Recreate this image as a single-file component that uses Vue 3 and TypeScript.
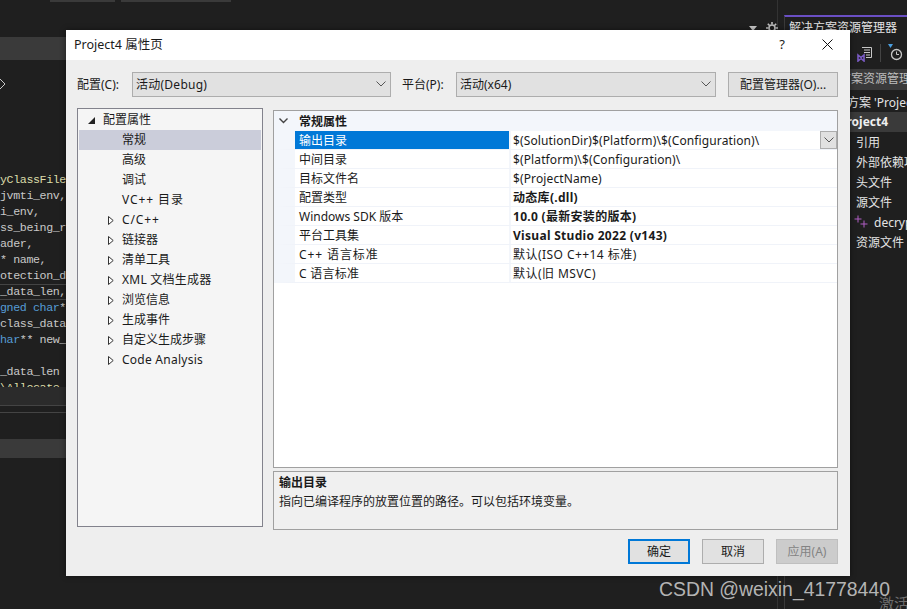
<script setup lang="ts">
interface CodeLine { text: string; tail?: string; cls?: string }
const codeLines: CodeLine[] = [
  { text: 'yClassFile', cls: 'fn' },
  { text: 'jvmti_env,' },
  { text: 'i_env,' },
  { text: 'ss_being_r' },
  { text: 'ader,' },
  { text: '* name,' },
  { text: 'otection_d' },
  { text: '_data_len,', cls: 'current' },
  { text: 'gned char', tail: '*', cls: 'kw' },
  { text: 'class_data' },
  { text: 'har', tail: '** new_', cls: 'kw' },
  { text: '\u00a0' },
  { text: '_data_len ' },
  { text: '\\Allocate', cls: 'fn' },
]
const tree = [
  { label: '常规', arrow: false, selected: true, ls: '' },
  { label: '高级', arrow: false, ls: '' },
  { label: '调试', arrow: false, ls: '' },
  { label: 'VC++ 目录', arrow: false, ls: 'ls2' },
  { label: 'C/C++', arrow: true, ls: 'ls2' },
  { label: '链接器', arrow: true, ls: '' },
  { label: '清单工具', arrow: true, ls: '' },
  { label: 'XML 文档生成器', arrow: true, ls: 'ls1' },
  { label: '浏览信息', arrow: true, ls: '' },
  { label: '生成事件', arrow: true, ls: '' },
  { label: '自定义生成步骤', arrow: true, ls: '' },
  { label: 'Code Analysis', arrow: true, ls: 'ls1' },
]
const props = [
  { name: '输出目录', value: '$(SolutionDir)$(Platform)\\$(Configuration)\\', selected: true, ls: '', vls: '' },
  { name: '中间目录', value: '$(Platform)\\$(Configuration)\\', ls: '', vls: '' },
  { name: '目标文件名', value: '$(ProjectName)', ls: '', vls: '' },
  { name: '配置类型', value: '动态库(.dll)', bold: true, ls: '', vls: '' },
  { name: 'Windows SDK 版本', value: '10.0 (最新安装的版本)', bold: true, ls: '', vls: '' },
  { name: '平台工具集', value: 'Visual Studio 2022 (v143)', bold: true, ls: '', vls: '' },
  { name: 'C++ 语言标准', value: '默认(ISO C++14 标准)', ls: 'ls2', vls: 'ls3' },
  { name: 'C 语言标准', value: '默认(旧 MSVC)', ls: 'ls1', vls: 'ls3' },
]
const solution = ['引用', '外部依赖项', '头文件', '源文件']
</script>

<template>
  <div class="screen">
    <div class="top-strips"><span class="strip s1"></span><span class="strip s2"></span></div>

    <div class="ide">
      <section class="editor">
        <div class="tab-band"></div>
        <div class="chev">
          <svg width="8" height="12" viewBox="0 0 8 12"><path d="M0 1 L5 6 L0 11" fill="none" stroke="#c8c8c8" stroke-width="1" /></svg>
        </div>
        <div class="code">
          <div v-for="(l, i) in codeLines" :key="i" class="code-line" :class="l.cls">{{ l.text }}<span v-if="l.tail" class="tail">{{ l.tail }}</span></div>
        </div>
        <div class="hscroll"></div>
        <div class="rule"></div>
        <div class="output-band"></div>
      </section>

      <div class="gutter-col"></div>

      <aside class="explorer">
        <div class="ex-title-row">
          <span class="ex-title">解决方案资源管理器</span>
        </div>
        <div class="ex-tools">
          <svg class="tool" width="16" height="18" viewBox="0 0 16 18">
            <path d="M1 11 L4 13.5 L7 11 L7 17 L4 14.5 L1 17 Z" fill="none" stroke="#7a5bc4" stroke-width="1.6" />
            <path d="M5 3.5 H14.5 V13.5 H9" fill="none" stroke="#c8c8c8" />
            <path d="M7 6 H13 M7 8.5 H13 M9 11 H13" stroke="#c8c8c8" />
          </svg>
          <span class="ex-sep"></span>
          <svg class="tool" width="15" height="18" viewBox="0 0 15 18">
            <path d="M0 0 H5 L2.5 4 Z" fill="#4a9fe0" />
            <circle cx="8.5" cy="10.5" r="5" fill="none" stroke="#c8c8c8" stroke-width="1.3" />
            <path d="M8.5 7.5 V10.5 H11" fill="none" stroke="#c8c8c8" />
          </svg>
        </div>
        <div class="ex-search">解决方案资源管理器</div>
        <div class="ex-sol">解决方案 'Project4'</div>
        <div class="ex-proj">Project4</div>
        <div v-for="s in solution" :key="s" class="ex-item">{{ s }}</div>
        <div class="ex-file">
          <svg class="tool" width="16" height="14" viewBox="0 0 16 14"><path d="M5 0.5 V7.5 M1.5 4 H8.5 M11 5.5 V12.5 M7.5 9 H14.5" stroke="#b05fc4" stroke-width="1" /></svg>
          <span>decrypt.cpp</span>
        </div>
        <div class="ex-item">资源文件</div>
      </aside>
    </div>

    <div class="head-icons">
      <svg width="8" height="5" viewBox="0 0 8 5"><path d="M0 0 H8 L4 5 Z" fill="#c8c8c8" /></svg>
      <svg width="12" height="12" viewBox="0 0 12 12">
        <circle cx="6" cy="6" r="3" fill="none" stroke="#c0c0c0" stroke-width="1.6" />
        <path d="M6 0 V2.5 M6 9.5 V12 M0 6 H2.5 M9.5 6 H12 M1.8 1.8 L3.5 3.5 M8.5 8.5 L10.2 10.2 M10.2 1.8 L8.5 3.5 M3.5 8.5 L1.8 10.2" stroke="#c0c0c0" stroke-width="1.6" />
      </svg>
    </div>

    <div class="dialog">
      <header class="titlebar">
        <span class="title">Project4 属性页</span>
        <span class="help">?</span>
        <svg class="close" width="11" height="11" viewBox="0 0 11 11"><path d="M0.5 0.5 L10.5 10.5 M10.5 0.5 L0.5 10.5" stroke="#111" stroke-width="1" /></svg>
      </header>

      <div class="body">
        <div class="config-row">
          <label class="lbl lbl-c">配置(C):</label>
          <div class="combo combo-c">
            <span class="ls1">活动(Debug)</span>
            <svg width="10" height="6" viewBox="0 0 10 6"><path d="M0.5 0.5 L5 5 L9.5 0.5" fill="none" stroke="#555" /></svg>
          </div>
          <label class="lbl lbl-p">平台(P):</label>
          <div class="combo combo-p">
            <span>活动(x64)</span>
            <svg width="10" height="6" viewBox="0 0 10 6"><path d="M0.5 0.5 L5 5 L9.5 0.5" fill="none" stroke="#555" /></svg>
          </div>
          <button class="mgr">配置管理器(O)...</button>
        </div>

        <div class="main">
          <nav class="tree">
            <div class="tree-row root">
              <svg class="arrow-open" width="7" height="7" viewBox="0 0 7 7"><path d="M7 0 V7 H0 Z" fill="#222" /></svg>
              <span>配置属性</span>
            </div>
            <div v-for="t in tree" :key="t.label" class="tree-row child" :class="{ sel: t.selected }">
              <svg v-if="t.arrow" class="arrow" width="6" height="9" viewBox="0 0 6 9"><path d="M0.5 0.5 L5.2 4.5 L0.5 8.5 Z" fill="#fff" stroke="#333" /></svg>
              <span :class="t.ls">{{ t.label }}</span>
            </div>
          </nav>

          <div class="right">
            <div class="grid">
              <div class="group">
                <svg width="9" height="6" viewBox="0 0 9 6"><path d="M0.5 0.5 L4.5 4.5 L8.5 0.5" fill="none" stroke="#444" stroke-width="1.4" /></svg>
                <span>常规属性</span>
              </div>
              <div v-for="p in props" :key="p.name" class="prop" :class="{ sel: p.selected }">
                <span class="pname" :class="p.ls">{{ p.name }}</span>
                <span class="pval" :class="[{ bold: p.bold }, p.vls]">{{ p.value }}</span>
                <span v-if="p.selected" class="drop">
                  <svg width="10" height="6" viewBox="0 0 10 6"><path d="M0.5 0.5 L5 5 L9.5 0.5" fill="none" stroke="#555" /></svg>
                </span>
              </div>
            </div>
            <div class="desc">
              <div class="desc-t">输出目录</div>
              <div class="desc-b">指向已编译程序的放置位置的路径。可以包括环境变量。</div>
            </div>
          </div>
        </div>

        <div class="actions">
          <button class="btn ok"><span class="btn-t">确定</span></button>
          <button class="btn"><span class="btn-t">取消</span></button>
          <button class="btn off"><span class="btn-t">应用(A)</span></button>
        </div>
      </div>
    </div>

    <div class="watermark">CSDN @weixin_41778440</div>
    <div class="activate">激活</div>
  </div>
</template>

<style>
html, body { margin: 0; background: #1f1f1f; }
</style>

<style scoped>
.screen {
  position: relative;
  width: 907px;
  height: 609px;
  overflow: hidden;
  background: #1f1f1f;
  font-family: "Noto Sans", "Noto Sans CJK SC", sans-serif;
  font-size: 12px;
  color: #1a1a1a;
}
.ls1 { letter-spacing: 0.25px; }
.ls2 { letter-spacing: 0.9px; }
.ls3 { letter-spacing: 0.5px; }
.top-strips { position: absolute; top: 0; left: 0; display: flex; }
.strip { height: 2px; background: #3a3a3a; display: block; }
.s1 { width: 65px; margin-left: 50px; }
.s2 { width: 110px; margin-left: 6px; }

.ide { display: flex; height: 609px; }
.editor { width: 777px; flex: none; padding-top: 37px; box-sizing: border-box; }
.tab-band { height: 23px; background: #3a3a3a; width: 66px; }
.chev { height: 113px; padding: 17px 0 0 0; box-sizing: border-box; }
.code {
  font-family: "Liberation Mono", monospace;
  font-size: 11.67px;
  letter-spacing: -0.4px;
  line-height: 16px;
  color: #c8c8c8;
  height: 215px;
  overflow: hidden;
  margin-top: -1px;
  width: 66px;
  white-space: pre;
}
.code-line { height: 16px; }
.code-line.fn { color: #dcdcaa; }
.code-line.kw { color: #569cd6; }
.tail { color: #c8c8c8; }
.code-line.current { border-top: 1px solid #444; border-bottom: 1px solid #444; height: 14px; line-height: 14px; }
.hscroll { height: 18px; width: 66px; background: #2b2b2b; border-bottom: 1px solid #444; }
.rule { height: 1px; margin-top: 6px; width: 66px; background: #444; }
.output-band { height: 19px; width: 66px; margin-top: 26px; background: #3a3a3a; }

.gutter-col { width: 7px; flex: none; border-left: 1px solid #333; box-sizing: border-box; }

.explorer {
  flex: 1;
  min-width: 0;
  margin-top: 15px;
  border-top: 2px solid #6a4fc4;
  border-left: 1px solid #3a3a3a;
  color: #e4e4e4;
  font-size: 12px;
  overflow: hidden;
  white-space: nowrap;
}
.ex-title-row { height: 22px; padding: 1px 0 0 4px; box-sizing: border-box; line-height: 20px; }
.ex-tools { height: 30px; display: flex; align-items: center; gap: 7px; padding: 0 0 3px 72px; box-sizing: border-box; }
.tool { flex: none; }
.ex-sep { width: 1px; height: 18px; background: #444; flex: none; }
.ex-search { height: 21px; line-height: 20px; background: #3a3a3a; padding-left: 30px; color: #bdbdbd; }
.ex-sol { height: 22px; line-height: 26px; padding-left: 38px; }
.ex-proj { height: 20px; line-height: 20px; padding-left: 54px; font-weight: 700; background: #3a3a3a; color: #f0f0f0; }
.ex-item { height: 20px; line-height: 22px; padding-left: 71px; }
.ex-file { height: 20px; display: flex; align-items: center; gap: 5px; padding-left: 68px; }

.head-icons { position: absolute; left: 749px; top: 22px; display: flex; align-items: center; gap: 9px; }

.dialog {
  position: absolute;
  left: 66px;
  top: 30px;
  width: 784px;
  height: 546px;
  background: #eeeeee;
  box-shadow: 0 0 6px rgba(0, 0, 0, 0.45);
  display: flex;
  flex-direction: column;
}
.titlebar {
  height: 30px;
  background: #fff;
  flex: none;
  display: flex;
  align-items: center;
  padding: 0 17px 2px 8px;
  box-sizing: border-box;
}
.title { flex: 1; font-size: 12.5px; padding-bottom: 1px; }
.help { font-size: 13px; margin-right: 37px; }
.close { flex: none; }
.body { flex: 1; display: flex; flex-direction: column; padding: 11px 12px 12px 11px; min-height: 0; }
.config-row { display: flex; align-items: center; height: 26px; flex: none; }
.lbl { flex: none; padding-bottom: 1px; }
.lbl-c { width: 55px; }
.lbl-p { width: 54px; margin-left: 11px; }
.combo {
  flex: none;
  height: 25px;
  box-sizing: border-box;
  border: 1px solid #adadad;
  background: #e1e1e1;
  display: flex;
  align-items: center;
  justify-content: space-between;
  padding: 0 4px 1px 3px;
  margin-top: 1px;
}
.combo-c { width: 259px; }
.combo-p { width: 260px; }
.mgr {
  margin-left: 12px;
  width: 110px;
  height: 25px;
  box-sizing: border-box;
  border: 1px solid #adadad;
  background: #e1e1e1;
  font: inherit;
  color: inherit;
  padding: 0;
}
.main { flex: 1; min-height: 0; display: flex; margin-top: 11px; }
.tree {
  width: 186px;
  height: 419px;
  box-sizing: border-box;
  flex: none;
  border: 1px solid #82828c;
  background: #f5f5f5;
  padding: 1px 1px;
}
.tree-row { height: 20px; box-sizing: border-box; padding-bottom: 2px; display: flex; align-items: center; position: relative; }
.root { padding-left: 24px; }
.child { padding-left: 43px; }
.tree-row.sel { background: #cbcdda; }
.arrow-open { position: absolute; left: 9px; top: 7px; }
.arrow { position: absolute; left: 29px; top: 6px; }
.right { margin-left: 10px; flex: 1; display: flex; flex-direction: column; }
.grid {
  height: 358px;
  box-sizing: border-box;
  border: 1px solid #a0a0a0;
  background: #fff;
  margin-top: 2px;
}
.group {
  height: 20px;
  background: #f3f6fb;
  display: flex;
  align-items: center;
  font-weight: 700;
  padding-left: 5px;
  gap: 11px;
}
.prop {
  height: 19px;
  box-sizing: border-box;
  display: flex;
  position: relative;
  border-left: 21px solid #f3f6fb;
  border-bottom: 1px solid #f0f3f9;
  align-items: center;
}
.pname { width: 214px; flex: none; padding-left: 4px; box-sizing: border-box; height: 18px; line-height: 20px; overflow: hidden; }
.prop.sel .pname { background: #0078d7; color: #fff; }
.pval { padding-left: 2px; border-left: 2px solid #f3f6fb; height: 18px; line-height: 20px; letter-spacing: 0.12px; }
.pval.bold { font-weight: 700; letter-spacing: 0.3px; }
.pval.ls3 { letter-spacing: 0.45px; }
.drop {
  position: absolute;
  right: 0;
  top: 0;
  width: 17px;
  height: 18px;
  box-sizing: border-box;
  border: 1px solid #adadad;
  background: #e1e1e1;
  display: flex;
  align-items: center;
  justify-content: center;
}
.desc {
  margin-top: 3px;
  height: 59px;
  box-sizing: border-box;
  border: 1px solid #a0a0a0;
  background: #f0f0f0;
  padding: 1px 5px;
  line-height: 19px;
}
.desc-t { font-weight: 700; }
.actions { display: flex; justify-content: flex-end; gap: 12px; flex: none; height: 25px; }
.btn {
  width: 62px;
  height: 25px;
  box-sizing: border-box;
  border: 1px solid #adadad;
  background: #e1e1e1;
  font: inherit;
  color: inherit;
  padding: 0 0 2px;
}
.btn.ok { border: 2px solid #0078d7; }
.btn.off { background: #cccccc; border-color: #bfbfbf; color: #838383; }

.watermark {
  position: absolute;
  left: 659px;
  top: 578px;
  font-family: "Liberation Sans", sans-serif;
  font-size: 19.4px;
  line-height: 22px;
  white-space: nowrap;
  color: #b4b4b4;
}
.activate { position: absolute; left: 879px; top: 593px; font-size: 15px; color: #6e6e6e; line-height: 20px; white-space: nowrap; }
</style>
